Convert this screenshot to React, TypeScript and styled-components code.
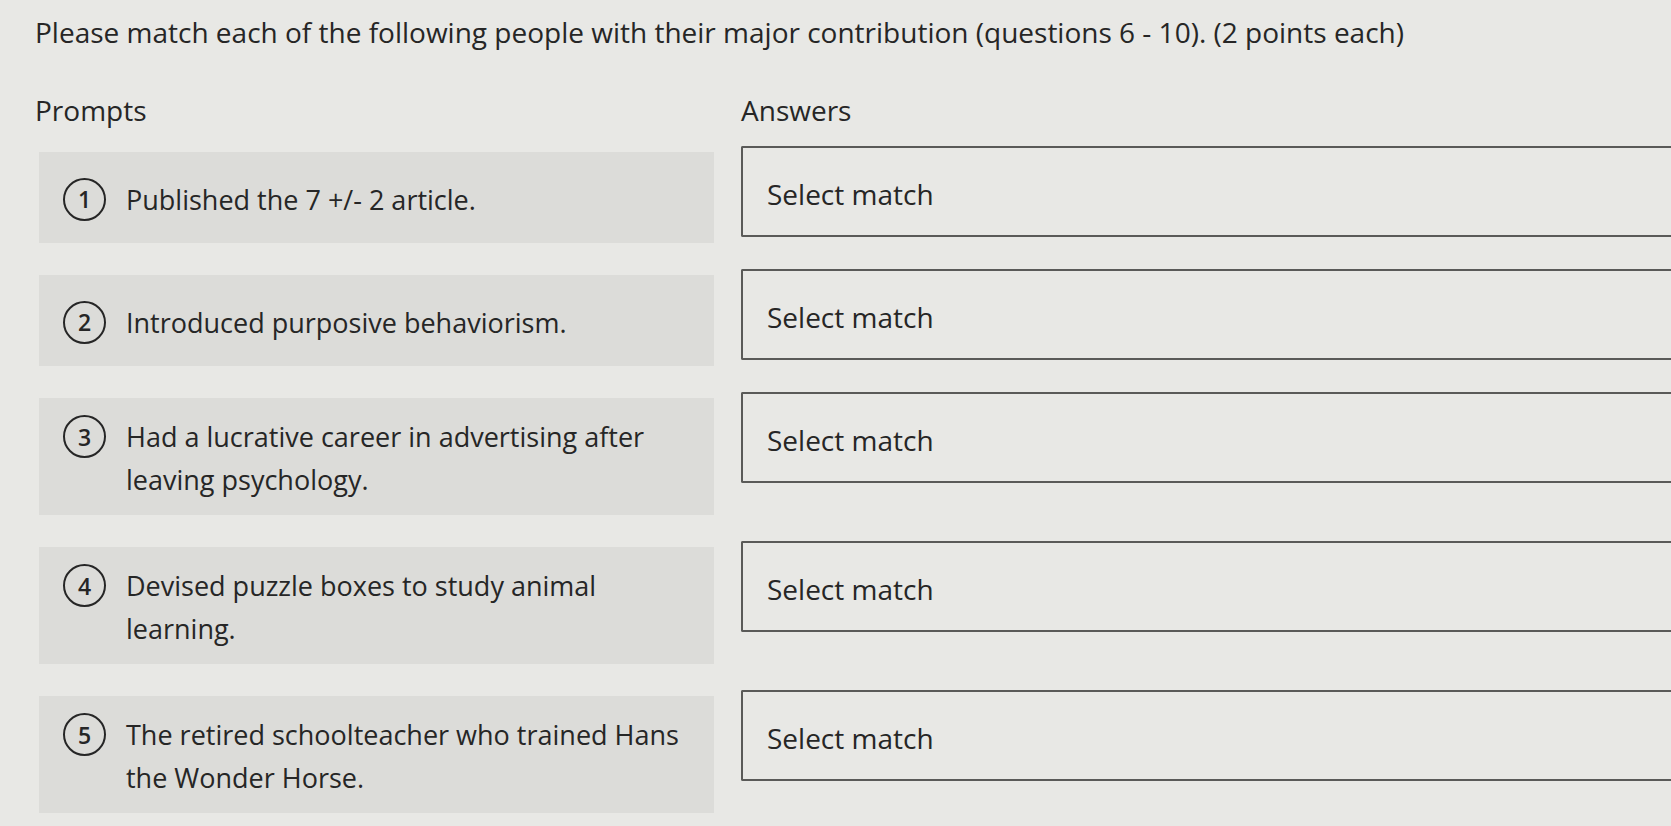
import React from "react";
import styled, { createGlobalStyle } from "styled-components";

type Prompt = {
    num: number;
    text: string;
};

const prompts: Prompt[] = [
    { num: 1, text: "Published the 7 +/- 2 article." },
    { num: 2, text: "Introduced purposive behaviorism." },
    { num: 3, text: "Had a lucrative career in advertising after leaving psychology." },
    { num: 4, text: "Devised puzzle boxes to study animal learning." },
    { num: 5, text: "The retired schoolteacher who trained Hans the Wonder Horse." },
];

function App(): JSX.Element {
    return (
        <>
            <GlobalStyle />
            <Page>
                <Title>
                    Please match each of the following people with their major contribution (questions 6 - 10). (2 points each)
                </Title>
                <Grid>
                    <ColHead>Prompts</ColHead>
                    <ColHead>Answers</ColHead>
                    {prompts.map((p) => (
                        <React.Fragment key={p.num}>
                            <PromptBox>
                                <PromptInner>
                                    <Num>{p.num}</Num>
                                    <PromptText>{p.text}</PromptText>
                                </PromptInner>
                            </PromptBox>
                            <AnswerCell>
                                <AnswerBox>Select match</AnswerBox>
                            </AnswerCell>
                        </React.Fragment>
                    ))}
                </Grid>
            </Page>
        </>
    );
}

const GlobalStyle = createGlobalStyle`
    html, body {
        margin: 0;
        padding: 0;
        background: #e8e8e5;
        overflow: hidden;
    }
    body {
        font-family: "Open Sans", "Noto Sans", sans-serif;
        color: #262626;
    }
`;

const Page = styled.div`
    width: 1671px;
    height: 826px;
    padding: 12px 0 0 35px;
    box-sizing: border-box;
    overflow: hidden;
`;

const Title = styled.h1`
    margin: 0;
    font-size: 28px;
    font-weight: 400;
    line-height: 40px;
    white-space: nowrap;
`;

const Grid = styled.div`
    display: grid;
    grid-template-columns: 679px 960px;
    column-gap: 27px;
    row-gap: 32px;
    margin-top: 38px;
`;

const ColHead = styled.div`
    font-size: 28px;
    line-height: 40px;
    margin-bottom: -10px;
`;

const PromptBox = styled.div`
    background: #dcdcd9;
    margin-left: 4px;
    display: flex;
    align-items: center;
    min-height: 91px;
    padding: 17px 8px 14px 24px;
    box-sizing: border-box;
`;

const PromptInner = styled.div`
    display: flex;
    align-items: flex-start;
`;

const Num = styled.div`
    flex: none;
    width: 43px;
    height: 43px;
    border: 2.5px solid #262626;
    border-radius: 50%;
    box-sizing: border-box;
    display: flex;
    align-items: center;
    justify-content: center;
    font-size: 23px;
    font-weight: 600;
    margin-right: 20px;
    margin-top: 0;
`;

const PromptText = styled.div`
    font-size: 27px;
    line-height: 43px;
    max-width: 575px;
`;

const AnswerCell = styled.div`
    align-self: start;
    margin-top: -6px;
`;

const AnswerBox = styled.div`
    height: 91px;
    box-sizing: border-box;
    border: 2px solid #5a5a58;
    border-right: none;
    border-radius: 2px 0 0 2px;
    display: flex;
    align-items: center;
    padding: 4px 0 0 24px;
    font-size: 28px;
`;

export default App;
